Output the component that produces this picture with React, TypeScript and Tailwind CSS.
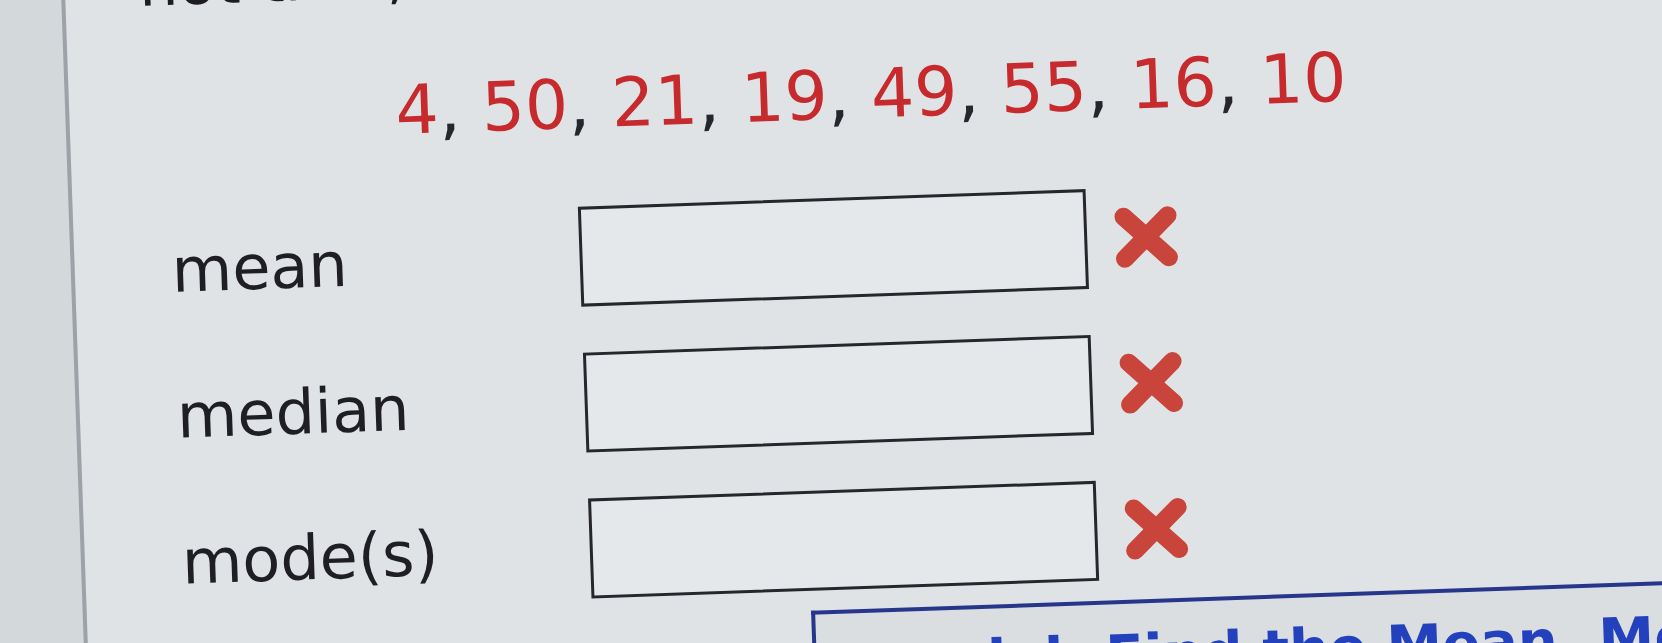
import React from "react";

const values = [4, 50, 21, 19, 49, 55, 16, 10];
const rows = ["mean", "median", "mode(s)"];

function WrongMark() {
  return (
    <svg width="70" height="66" viewBox="0 0 70 66" className="ml-[24px] shrink-0">
      <g stroke="#c9443a" strokeWidth="18" strokeLinecap="round">
        <line x1="13" y1="12" x2="57" y2="54" />
        <line x1="57" y1="12" x2="13" y2="54" />
      </g>
    </svg>
  );
}

export default function App() {
  return (
    <div className="w-[1662px] h-[643px] overflow-hidden bg-[#dfe3e5] font-['DejaVu_Sans',sans-serif]">
      {/* photographed screen, slightly tilted */}
      <div className="w-[1760px] h-[760px] -ml-[49px] -mt-[58px] rotate-[-2deg] flex bg-[#dfe3e5]">
        <div className="w-[126px] shrink-0 bg-[#d3d8db] border-r-4 border-[#9ca2a7]" />

        <div className="flex-1 flex flex-col min-w-0">
          <p className="-mt-[17px] ml-[74px] text-[62px] leading-[72px] text-[#1c1c22] whitespace-nowrap">
            not that,
          </p>

          <p className="mt-[59px] ml-[326px] text-[68px] leading-[80px] text-[#c62a2c] whitespace-nowrap">
            {values.map((v, i) => (
              <span key={i}>
                {v}
                {i < values.length - 1 && <span className="text-[#26262c]">, </span>}
              </span>
            ))}
          </p>

          <div className="mt-[62px] flex flex-col gap-[46px]">
            {rows.map((label) => (
              <div key={label} className="flex items-center pl-[97px]">
                <span className="w-[408px] shrink-0 text-[62px] leading-[72px] text-[#1e1e24]">
                  {label}
                </span>
                <div className="w-[508px] h-[100px] shrink-0 border-[3px] border-[#26262c] bg-[#e4e8ea]" />
                <WrongMark />
              </div>
            ))}
          </div>

          <div className="mt-[20px] ml-[724px] border-t-4 border-l-4 border-[#27368a] bg-[#dadee1] pt-[24px] pl-[6px] overflow-hidden">
            <p className="text-[56px] leading-none font-bold text-[#2340bd] whitespace-nowrap">
              Tutorial: Find the Mean, Mode, and Median
            </p>
          </div>
        </div>
      </div>
    </div>
  );
}
